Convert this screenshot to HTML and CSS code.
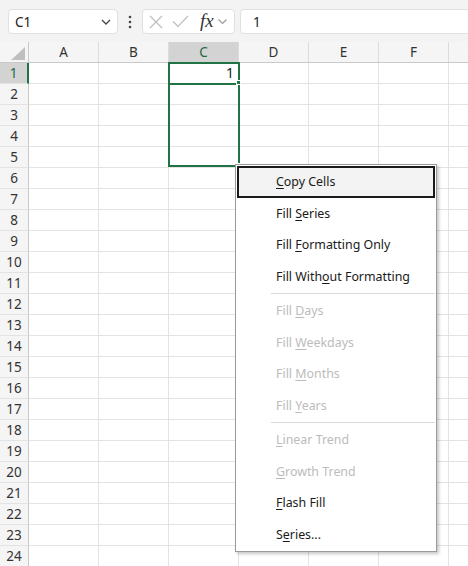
FILE: index.html
```html
<!DOCTYPE html>
<html>
<head>
<meta charset="utf-8">
<link rel="stylesheet" href="styles.css">
</head>
<body>
<div class="app">
  <div class="toolbar">
    <div class="namebox">
      <span class="nb-text">C1</span>
      <svg class="chev" width="10" height="6" viewBox="0 0 10 6"><path d="M1 1 L5 5 L9 1" fill="none" stroke="#444" stroke-width="1.3"/></svg>
    </div>
    <div class="dots">
      <svg width="4" height="14" viewBox="0 0 4 14"><circle cx="2" cy="2" r="1.3" fill="#444"/><circle cx="2" cy="7" r="1.3" fill="#444"/><circle cx="2" cy="12" r="1.3" fill="#444"/></svg>
    </div>
    <div class="fxbox">
      <svg class="ico-x" width="14" height="14" viewBox="0 0 14 14"><path d="M1 1 L13 13 M13 1 L1 13" stroke="#bdbdbd" stroke-width="1.2" fill="none"/></svg>
      <svg class="ico-check" width="17" height="13" viewBox="0 0 17 13"><path d="M1 6.5 L6 11.5 L16 1" stroke="#bdbdbd" stroke-width="1.2" fill="none"/></svg>
      <span class="fx">fx</span>
      <svg class="chev-sm" width="9" height="5" viewBox="0 0 9 5"><path d="M0.5 0.5 L4.5 4.5 L8.5 0.5" fill="none" stroke="#999" stroke-width="1.1"/></svg>
    </div>
    <div class="formula"><span class="f-text">1</span></div>
  </div>

  <div class="sheet">
    <div class="hdr">
      <div class="corner"><svg width="14" height="13" viewBox="0 0 14 13"><polygon points="14,0 14,13 0,13" fill="#bfbfbf"/></svg></div>
      <div class="ch">A</div><div class="ch">B</div><div class="ch sel">C</div><div class="ch">D</div><div class="ch">E</div><div class="ch">F</div><div class="ch"></div>
    </div>
    <div class="row"><div class="rh sel">1</div><div class="cells"><span></span><span></span><span class="val">1</span></div></div>
    <div class="row"><div class="rh">2</div><div class="cells"></div></div>
    <div class="row"><div class="rh">3</div><div class="cells"></div></div>
    <div class="row"><div class="rh">4</div><div class="cells"></div></div>
    <div class="row"><div class="rh">5</div><div class="cells"></div></div>
    <div class="row"><div class="rh">6</div><div class="cells"></div></div>
    <div class="row"><div class="rh">7</div><div class="cells"></div></div>
    <div class="row"><div class="rh">8</div><div class="cells"></div></div>
    <div class="row"><div class="rh">9</div><div class="cells"></div></div>
    <div class="row"><div class="rh">10</div><div class="cells"></div></div>
    <div class="row"><div class="rh">11</div><div class="cells"></div></div>
    <div class="row"><div class="rh">12</div><div class="cells"></div></div>
    <div class="row"><div class="rh">13</div><div class="cells"></div></div>
    <div class="row"><div class="rh">14</div><div class="cells"></div></div>
    <div class="row"><div class="rh">15</div><div class="cells"></div></div>
    <div class="row"><div class="rh">16</div><div class="cells"></div></div>
    <div class="row"><div class="rh">17</div><div class="cells"></div></div>
    <div class="row"><div class="rh">18</div><div class="cells"></div></div>
    <div class="row"><div class="rh">19</div><div class="cells"></div></div>
    <div class="row"><div class="rh">20</div><div class="cells"></div></div>
    <div class="row"><div class="rh">21</div><div class="cells"></div></div>
    <div class="row"><div class="rh">22</div><div class="cells"></div></div>
    <div class="row"><div class="rh">23</div><div class="cells"></div></div>
    <div class="row"><div class="rh">24</div><div class="cells"></div></div>

    <div class="selection">
      <div class="sel-line"></div>
    </div>
    <div class="handle handle-1"></div>
    <div class="handle handle-2"></div>

    <div class="menu">
      <div class="item active"><span><u>C</u>opy Cells</span></div>
      <div class="item"><span>Fill <u>S</u>eries</span></div>
      <div class="item"><span>Fill <u>F</u>ormatting Only</span></div>
      <div class="item"><span>Fill With<u>o</u>ut Formatting</span></div>
      <div class="sep"></div>
      <div class="item dis"><span>Fill <u>D</u>ays</span></div>
      <div class="item dis"><span>Fill <u>W</u>eekdays</span></div>
      <div class="item dis"><span>Fill <u>M</u>onths</span></div>
      <div class="item dis"><span>Fill <u>Y</u>ears</span></div>
      <div class="sep"></div>
      <div class="item dis"><span><u>L</u>inear Trend</span></div>
      <div class="item dis"><span><u>G</u>rowth Trend</span></div>
      <div class="item"><span><u>F</u>lash Fill</span></div>
      <div class="item"><span>S<u>e</u>ries...</span></div>
    </div>
  </div>
</div>
</body>
</html>
```
FILE: styles.css
```css
* { box-sizing: border-box; }
html, body { margin: 0; padding: 0; }
body {
  width: 468px;
  height: 566px;
  overflow: hidden;
  background: #fff;
  font-family: "Noto Sans", "Open Sans", sans-serif;
  color: #1f1f1f;
}
.app { width: 468px; height: 566px; overflow: hidden; }

.toolbar {
  height: 42px;
  background: #f3f3f3;
  display: flex;
  align-items: flex-start;
  padding: 9px 0 0 8px;
}
.namebox {
  width: 110px;
  flex: none;
  height: 25px;
  background: #fff;
  border: 1px solid #e0e0e0;
  border-radius: 4px;
  display: flex;
  align-items: center;
  justify-content: space-between;
  padding: 0 6px 0 6px;
}
.nb-text { font-size: 13.5px; color: #222; }
.dots {
  width: 24px;
  flex: none;
  height: 25px;
  display: flex;
  align-items: center;
  justify-content: center;
}
.fxbox {
  width: 93px;
  flex: none;
  height: 25px;
  background: #fff;
  border: 1px solid #e0e0e0;
  border-radius: 4px;
  display: flex;
  align-items: center;
  padding-left: 6px;
}
.ico-x { margin-right: 9px; }
.ico-check { margin-right: 11px; }
.fx {
  font-family: "Liberation Serif", "DejaVu Serif", serif;
  font-style: italic;
  font-size: 19px;
  color: #333;
  line-height: 1;
  margin-top: -3px;
  margin-right: 4px;
}
.formula {
  flex: 1;
  margin-left: 5px;
  margin-right: -10px;
  height: 25px;
  background: #fff;
  border: 1px solid #e0e0e0;
  border-radius: 4px;
  display: flex;
  align-items: center;
  padding-left: 12px;
}
.f-text { font-size: 13.5px; color: #222; }

.sheet { position: relative; }
.hdr {
  display: flex;
  height: 21px;
  background: #f5f5f5;
  border-bottom: 1px solid #c9c9c9;
}
.corner {
  width: 29px;
  flex: none;
  border-right: 1px solid #c9c9c9;
  display: flex;
  align-items: flex-end;
  justify-content: flex-end;
  padding: 0 3px 2px 0;
}
.ch {
  width: 70px;
  flex: none;
  border-right: 1px solid #dcdcdc;
  font-size: 13.5px;
  color: #333;
  display: flex;
  align-items: center;
  justify-content: center;
}
.ch.sel { background: #d3d3d3; color: #1d6b3c; }

.row { display: flex; height: 21px; }
.rh {
  width: 29px;
  flex: none;
  background: #f5f5f5;
  border-right: 1px solid #c9c9c9;
  border-bottom: 1px solid #e3e3e3;
  font-size: 13.5px;
  color: #333;
  display: flex;
  align-items: center;
  justify-content: center;
}
.rh.sel { background: #d3d3d3; color: #1d6b3c; border-right: 2px solid #217346; }
.cells {
  flex: none;
  width: 490px;
  display: grid;
  grid-template-columns: repeat(7, 70px);
  border-bottom: 1px solid #e3e3e3;
  background-image: linear-gradient(to left, #e3e3e3 1px, transparent 1px);
  background-size: 70px 100%;
}
.val {
  font-size: 14px;
  color: #222;
  text-align: right;
  padding-right: 5px;
  line-height: 20px;
}

.selection {
  position: absolute;
  left: 168px;
  top: 20px;
  width: 72px;
  height: 105px;
  border: 2px solid #217346;
}
.sel-line {
  position: absolute;
  left: 0;
  right: 0;
  top: 19px;
  height: 2px;
  background: #217346;
}
.handle {
  position: absolute;
  width: 5px;
  height: 5px;
  background: #217346;
  border: 1px solid #fff;
}
.handle-1 { left: 236px; top: 38px; }
.handle-2 { left: 235px; top: 121px; }

.menu {
  position: absolute;
  left: 235px;
  top: 122px;
  width: 202px;
  background: #fff;
  border: 1px solid #9a9a9a;
  box-shadow: 2px 2px 3px rgba(0,0,0,0.22);
  padding: 1px;
}
.item {
  height: 31.5px;
  display: flex;
  align-items: center;
  padding-left: 39px;
  font-size: 12.4px;
  color: #1a1a1a;
  white-space: nowrap;
}
.item u { text-underline-offset: 2px; }
.item.active {
  background: #f3f3f3;
  border: 2px solid #1a1a1a;
  padding-left: 37px;
}
.item.dis { color: #bcbcbc; }
.sep {
  height: 3px;
  margin-left: 34px;
  position: relative;
}
.sep::after {
  content: "";
  position: absolute;
  left: 0;
  right: 0;
  top: 1px;
  height: 1px;
  background: #dadada;
}
```
